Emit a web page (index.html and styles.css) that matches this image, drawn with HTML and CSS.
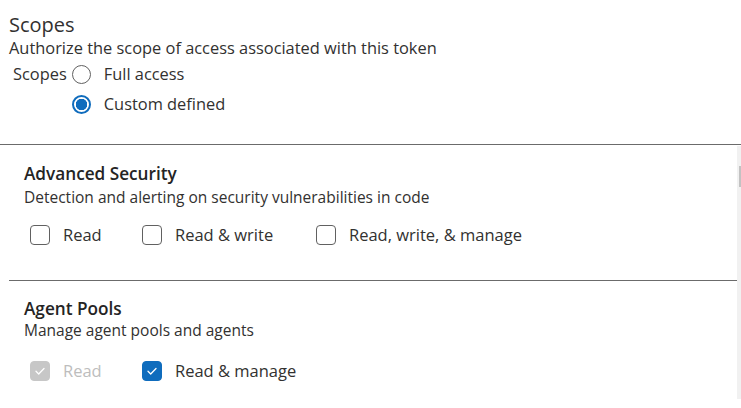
FILE: index.html
```html
<!DOCTYPE html>
<html>
<head>
<meta charset="utf-8">
<link rel="stylesheet" href="styles.css">
</head>
<body>
<div class="page">
  <div class="header">
    <div class="title">Scopes</div>
    <div class="subtitle">Authorize the scope of access associated with this token</div>
    <div class="scope-row">
      <div class="scope-label">Scopes</div>
      <div class="radios">
        <label class="radio"><span class="radio-circle"></span><span>Full access</span></label>
        <label class="radio"><span class="radio-circle checked"></span><span>Custom defined</span></label>
      </div>
    </div>
  </div>
  <div class="scroll-area">
    <div class="sections">
      <div class="section">
        <div class="section-title">Advanced Security</div>
        <div class="section-desc">Detection and alerting on security vulnerabilities in code</div>
        <div class="checks">
          <label class="check w1"><span class="box"></span><span>Read</span></label>
          <label class="check w2"><span class="box"></span><span>Read &amp; write</span></label>
          <label class="check"><span class="box"></span><span>Read, write, &amp; manage</span></label>
        </div>
      </div>
      <div class="section">
        <div class="section-title">Agent Pools</div>
        <div class="section-desc">Manage agent pools and agents</div>
        <div class="checks">
          <label class="check w1 disabled"><span class="box checked-disabled"><svg viewBox="0 0 20 20" width="20" height="20"><path d="M6 10.3 L8.7 13 L14 7.5" fill="none" stroke="#fff" stroke-width="1.3" stroke-linecap="round" stroke-linejoin="round"/></svg></span><span>Read</span></label>
          <label class="check"><span class="box checked"><svg viewBox="0 0 20 20" width="20" height="20"><path d="M6 10.3 L8.7 13 L14 7.5" fill="none" stroke="#fff" stroke-width="1.3" stroke-linecap="round" stroke-linejoin="round"/></svg></span><span>Read &amp; manage</span></label>
        </div>
      </div>
    </div>
    <div class="scrollbar"><div class="thumb"></div></div>
  </div>
</div>
</body>
</html>
```
FILE: styles.css
```css
html, body {
  margin: 0;
  padding: 0;
  background: #fff;
}
body {
  font-family: "Open Sans", "Noto Sans", sans-serif;
  color: #323130;
  width: 741px;
  height: 408px;
  overflow: hidden;
}
.header {
  padding: 11px 0 0 9px;
  border-bottom: 1px solid #6b6b6b;
  height: 133px;
  box-sizing: content-box;
}
.title {
  font-size: 20px;
  line-height: 28px;
  color: #323130;
}
.subtitle {
  font-size: 16.4px;
  line-height: 20px;
  margin-top: -1px;
}
.scope-row {
  display: flex;
  margin-top: 5px;
  padding-left: 4px;
}
.scope-label {
  font-size: 16.4px;
  line-height: 22px;
}
.radios {
  display: flex;
  flex-direction: column;
  gap: 8px;
  margin-left: 5px;
}
.radio {
  display: flex;
  align-items: center;
  gap: 13px;
  font-size: 16.4px;
  line-height: 22px;
}
.radio-circle {
  width: 19px;
  height: 19px;
  border: 1px solid #616161;
  border-radius: 50%;
  box-sizing: border-box;
  flex: none;
}
.radio-circle.checked {
  border: 2px solid #0f6cbd;
  background: radial-gradient(circle, #0f6cbd 0 5.5px, #fff 6px);
}
.scroll-area {
  display: flex;
  height: 254px;
  margin-top: 1px;
}
.sections {
  flex: 1;
  padding-left: 9px;
}
.section {
  padding: 17px 0 0 15px;
  height: 117px;
}
.section + .section {
  border-top: 1px solid #6b6b6b;
}
.section-title {
  font-size: 17.2px;
  font-weight: 600;
  line-height: 22px;
  color: #242424;
}
.section-desc {
  font-size: 15.5px;
  line-height: 20px;
  margin-top: 2px;
}
.section + .section .section-desc {
  margin-top: 0;
}
.checks {
  display: flex;
  margin-top: 17px;
  padding-left: 6px;
}
.section + .section .checks {
  margin-top: 20px;
}
.check {
  display: flex;
  align-items: center;
  gap: 13px;
  font-size: 16.5px;
  line-height: 22px;
}
.check.w1 { width: 112px; }
.check.w2 { width: 174px; }
.box {
  width: 20px;
  height: 20px;
  box-sizing: border-box;
  border: 1px solid #616161;
  border-radius: 4px;
  flex: none;
  display: flex;
}
.box svg { display: block; margin: -1px; }
.box.checked {
  background: #0f6cbd;
  border-color: #0f6cbd;
}
.box.checked-disabled {
  background: #c7c7c7;
  border-color: #c7c7c7;
}
.check.disabled { color: #bdbdbd; }
.scrollbar {
  width: 4px;
  background: #f1f1f1;
  height: 253px;
  position: relative;
}
.thumb {
  position: absolute;
  right: 0;
  top: 20px;
  width: 2px;
  height: 21px;
  background: #c2c2c2;
}
```
